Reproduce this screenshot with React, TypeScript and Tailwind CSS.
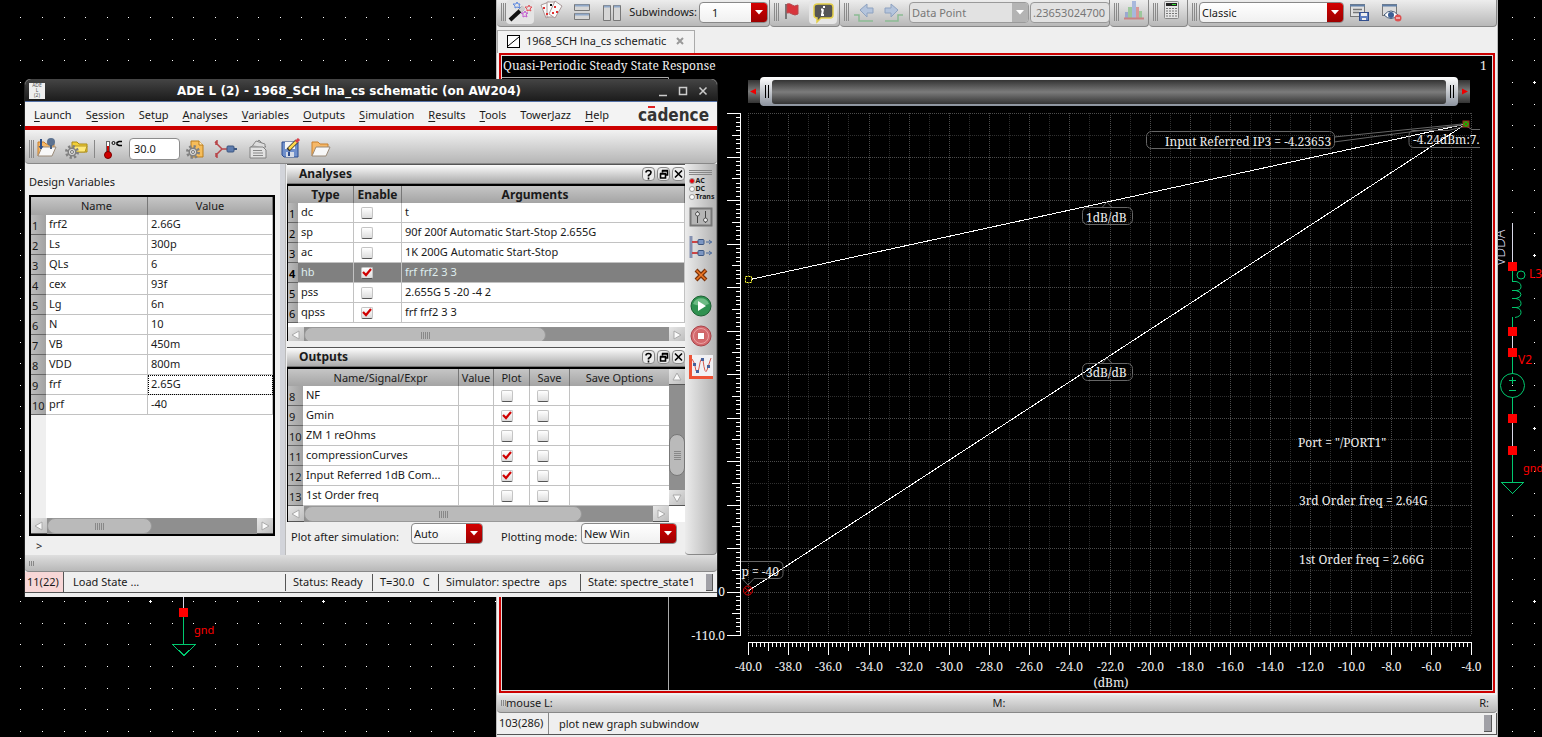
import type { ReactNode } from "react";
import clsx from "clsx";

const designVars = [
  ["frf2", "2.66G"],
  ["Ls", "300p"],
  ["QLs", "6"],
  ["cex", "93f"],
  ["Lg", "6n"],
  ["N", "10"],
  ["VB", "450m"],
  ["VDD", "800m"],
  ["frf", "2.65G"],
  ["prf", "-40"],
];

const analyses = [
  { type: "dc", on: false, args: "t" },
  { type: "sp", on: false, args: "90f 200f Automatic Start-Stop 2.655G" },
  { type: "ac", on: false, args: "1K 200G Automatic Start-Stop" },
  { type: "hb", on: true, args: "frf frf2 3 3" },
  { type: "pss", on: false, args: "2.655G 5 -20 -4 2" },
  { type: "qpss", on: true, args: "frf frf2 3 3" },
];

const outputs = [
  { n: 8, name: "NF", plot: false },
  { n: 9, name: "Gmin", plot: true },
  { n: 10, name: "ZM 1 reOhms", plot: false },
  { n: 11, name: "compressionCurves", plot: true },
  { n: 12, name: "Input Referred 1dB Com...", plot: true },
  { n: 13, name: "1st Order freq", plot: false },
];

const menus = [
  ["", "L", "aunch"],
  ["S", "e", "ssion"],
  ["Set", "u", "p"],
  ["", "A", "nalyses"],
  ["", "V", "ariables"],
  ["", "O", "utputs"],
  ["", "S", "imulation"],
  ["", "R", "esults"],
  ["", "T", "ools"],
  ["TowerJazz", "", ""],
  ["", "H", "elp"],
];

const range = (n: number) => Array.from({ length: n }, (_, i) => i);

/* ---------- schematic canvas ---------- */

const PITCH = 21.625;

function gridPath() {
  let d = "";
  for (let j = -1; j < 34; j++) {
    const y = Math.round(82 + (j - 3) * PITCH);
    for (let i = -7; i < 66; i++) {
      const x = Math.round(150 + i * PITCH);
      d += `M${x} ${y}h1v1h-1z`;
      if (i % 8 === 0 && (j - 3) % 8 === 0) d += `M${x - 1} ${y}h3v1h-3zM${x} ${y - 1}h1v3h-1z`;
    }
  }
  return d;
}

function Schematic() {
  return (
    <svg className="absolute left-0 top-0" width="1542" height="737" fontFamily="'Noto Sans', sans-serif" fontSize="12">
      <path d={gridPath()} fill="#fff" shapeRendering="crispEdges" />
      <g fill="none" stroke="#00c86e" shapeRendering="crispEdges">
        <path d="M183.500 617v27M172.500 644.500h23l-11.500 11z" />
        <path d="M1512.500 271v10M1512.500 317v10M1512.500 357v17M1512.500 397v17M1512.500 455v27M1501.500 482.500h22l-11 11z" />
        <path d="M1509 380.500h7M1512.500 377v7M1509 390.500h7" />
      </g>
      <g fill="none" stroke="#00c86e">
        <circle cx="1521" cy="275" r="4" />
        <circle cx="1512.500" cy="385.500" r="12" />
        <path d="M1512 281.500h4q5 1 5 5t-5 4h-4h4q5 1 5 4t-5 4h-4h4q5 1 5 5t-5 4h-4h4q5 1 5 5t-6 5" />
      </g>
      <path d="M183.500 597v12M1512.500 223v40M1512.500 335v15M1512.500 422v25" stroke="#d8d8e8" />
      <path
        d="M179 608h9v9h-9zM1508 262h9v9h-9zM1508 327h9v9h-9zM1508 348h9v9h-9zM1508 414h9v9h-9zM1508 446h9v9h-9z"
        fill="#f00"
      />
      <g fill="#f00">
        <text x="194" y="634" fontSize="11">gnd</text>
        <text x="1523" y="472" fontSize="11">gnd</text>
        <text x="1529" y="278">L3</text>
        <text x="1518" y="364">V2</text>
      </g>
      <text transform="translate(1505 266) rotate(-90)" fill="#d8d8e8" fontSize="14" fontWeight="300">VDDA</text>
    </svg>
  );
}

/* ---------- graph ---------- */

const X0 = 748;
const X1 = 1471;
const Y0 = 113;
const Y1 = 635;
const px = (v: number) => Math.round(X0 + ((v + 40) / 36) * (X1 - X0)) + 0.5;
const py = (v: number) => Math.round(Y1 - ((v + 110) / 120) * (Y1 - Y0)) + 0.5;

function tickPaths() {
  let d = `M740.500 ${Y0}V${Y1 + 1}M${X0} 642.500H${X1 + 1}`;
  for (const k of range(121)) {
    const len = k % 10 === 0 ? 13 : k % 5 === 0 ? 8 : 4;
    d += `M740 ${py(-110 + k)}h-${len}`;
  }
  for (const k of range(181)) {
    const len = k % 10 === 0 ? 12 : k % 5 === 0 ? 8 : 4;
    d += `M${px(-40 + k / 5)} 643v${len}`;
  }
  return d;
}

function Graph() {
  return (
    <svg
      className="block w-full"
      viewBox="502 56 990 634"
      preserveAspectRatio="xMinYMin meet"
      fontFamily="'Noto Serif', 'Liberation Serif', serif"
      fontSize="12"
    >
      <defs>
        <linearGradient id="thumb" x2="0" y2="1">
          <stop offset="0" stopColor="#333" />
          <stop offset=".5" stopColor="#7c7c7c" />
          <stop offset="1" stopColor="#333" />
        </linearGradient>
        <linearGradient id="frame" x2="0" y2="1">
          <stop offset="0" stopColor="#fff" />
          <stop offset="1" stopColor="#8c939e" />
        </linearGradient>
        <clipPath id="plotClip">
          <rect x="741" y="100" width="739" height="540" />
        </clipPath>
      </defs>

      <text x="503" y="70" fill="#eee">Quasi-Periodic Steady State Response</text>
      <text x="1480" y="70" fill="#eee">1</text>
      <path d="M502 77.500H668.500V690" fill="none" stroke="#aaa" />

      <rect x="748" y="80" width="722" height="23" fill="url(#thumb)" />
      <rect x="760" y="77" width="698" height="29" rx="4" fill="url(#frame)" />
      <rect x="772" y="80" width="674" height="24" rx="3" fill="url(#thumb)" />
      <path d="M765.500 85v13M768.500 85v13M1450.500 85v13M1453.500 85v13" stroke="#000" />
      <path d="M750 91.500l6-3v6zM1468 91.500l-6-3v6z" fill="#e00" />

      <g strokeDasharray="1 1" shapeRendering="crispEdges">
        {range(37).map((i) => (
          <path key={i} d={`M${px(i - 40)} ${Y0}V${Y1}`} stroke={i % 2 ? "#303030" : "#4c4c4c"} />
        ))}
        {range(25).map((i) => (
          <path key={i} d={`M${X0} ${py(i * 5 - 110)}H${X1}`} stroke={i % 2 ? "#303030" : "#4c4c4c"} />
        ))}
      </g>
      <path d={tickPaths()} stroke="#fff" shapeRendering="crispEdges" />

      <path d="M748 280L1466 124M748 591L1466 124" stroke="#fff" strokeWidth="1" shapeRendering="crispEdges" />

      <g fill="none" stroke="#666" clipPath="url(#plotClip)">
        <rect x="1146.500" y="131.500" width="188" height="17" rx="5" />
        <path d="M1334 137L1462 124M1334 142L1462 125" />
        <path d="M1490 147.500H1414q-5 0-5-5v-7q0-5 5-5H1448L1466 126L1472 129.500H1490" />
        <rect x="1082.500" y="207.500" width="50" height="17" rx="5" />
        <path d="M1102 207.500L1107 202L1112 207.500" />
        <rect x="1082.500" y="363.500" width="50" height="17" rx="5" />
        <path d="M1102 363.500L1107 358L1112 363.500" />
        <path d="M700 561.500H778q5 0 5 5v7q0 5-5 5H754L748 585L742 578.500" />
      </g>

      <g fill="#eee" clipPath="url(#plotClip)">
        <text x="1165" y="146">Input Referred IP3 = -4.23653</text>
        <text x="1413" y="144">-4.24dBm:7.7</text>
        <text x="1086" y="222">1dB/dB</text>
        <text x="1086" y="377">3dB/dB</text>
        <text x="779" y="576" textAnchor="end">p = -40</text>
        <text x="1298" y="447">Port = "/PORT1"</text>
        <text x="1299" y="505">3rd Order freq = 2.64G</text>
        <text x="1299" y="564">1st Order freq = 2.66G</text>
      </g>

      <rect x="1463" y="121" width="6" height="6" fill="#0c0" stroke="#a22" />
      <path d="M1463 121l6 6M1469 121l-6 6" stroke="#7a4a10" />
      <rect x="745.500" y="276.500" width="6" height="6" fill="#000" stroke="#ff3" strokeDasharray="2 1" />
      <g fill="none" stroke="#d00">
        <circle cx="748" cy="590.500" r="4.500" />
        <path d="M745 588l6 5M751 588l-6 5" />
      </g>

      <g fill="#eee">
        <text x="725" y="640" textAnchor="end">-110.0</text>
        <text x="725" y="596" textAnchor="end">-100.0</text>
        {range(19).map((i) => (
          <text key={i} x={px(i * 2 - 40)} y="671" textAnchor="middle">
            {(i * 2 - 40).toFixed(1)}
          </text>
        ))}
        <text x="1111" y="687" textAnchor="middle">(dBm)</text>
      </g>
    </svg>
  );
}

/* ---------- small controls ---------- */

function Grip() {
  return (
    <svg width="5" height="18" className="shrink-0">
      <path d="M.5 0v18M2.500 0v18M4.500 0v18" stroke="#8a8a8a" />
    </svg>
  );
}

function Tick({ label, checked }: { label: string; checked: boolean }) {
  return (
    <span className="relative block h-3 w-3">
      <input
        type="checkbox"
        aria-label={label}
        defaultChecked={checked}
        className="peer block h-3 w-3 appearance-none rounded-[2px] border border-[#c4c4c4] border-b-[#555] bg-linear-to-b from-white to-[#dcdcdc]"
      />
      <svg viewBox="0 0 12 12" className="pointer-events-none absolute inset-0 hidden h-3 w-3 peer-checked:block">
        <path d="M2 5l3 3 5-6" fill="none" stroke="#d00000" strokeWidth="2.200" />
      </svg>
    </span>
  );
}

function Drop({ label, value, className, muted }: { label: string; value: string; className: string; muted?: boolean }) {
  return (
    <span
      className={clsx(
        "relative flex h-[21px] shrink-0 overflow-hidden rounded-[4px] border",
        muted ? "border-[#9a9a9a] bg-[#e2e2e2] text-[#777]" : "border-[#888] bg-linear-to-b from-white to-[#f0f0f0]",
        className
      )}
    >
      <select aria-label={label} className="w-full appearance-none bg-transparent px-0.5 leading-none outline-none">
        <option>{value}</option>
      </select>
      <span
        className={clsx(
          "pointer-events-none absolute inset-y-0 right-0 flex w-4 items-center justify-center",
          muted ? "bg-[#b4b4b4]" : "bg-linear-to-b from-[#d40000] to-[#9c0000]"
        )}
      >
        <svg width="8" height="5">
          <path d="M0 0h8L4 4.500z" fill="#fff" />
        </svg>
      </span>
    </span>
  );
}

function ArrowBtn({ dir }: { dir: "left" | "right" | "up" | "down" }) {
  const d = { left: "M9 2v8L2 6z", right: "M3 2v8l7-4z", up: "M2 9h8L6 2z", down: "M2 3h8l-4 7z" }[dir];
  return (
    <button aria-label={dir} className="flex h-4 w-4 shrink-0 items-center justify-center border-b border-[#555] bg-linear-to-br from-[#e6e6e6] to-[#bdbdbd]">
      <svg width="12" height="12">
        <path d={d} fill="#fafafa" stroke="#aaa" />
      </svg>
    </button>
  );
}

function HBar({ thumb }: { thumb: string }) {
  return (
    <div className="flex h-4 shrink-0 bg-[#8f8f8f]">
      <ArrowBtn dir="left" />
      <div className="flex-1">
        <div className={clsx("flex h-full items-center justify-center rounded-full border border-[#999] bg-[#bababa]", thumb)}>
          <svg width="9" height="7">
            <path d="M.5 0v7M2.500 0v7M4.500 0v7M6.500 0v7M8.500 0v7" stroke="#888" />
          </svg>
        </div>
      </div>
      <ArrowBtn dir="right" />
    </div>
  );
}

function PaneTitle({ children }: { children: ReactNode }) {
  return (
    <div className="flex h-5 shrink-0 items-center border-y border-t-[#555] border-b-[#777] bg-linear-to-b from-[#fdfdfd] to-[#ababab] pl-3">
      <h2 className="flex-1 text-[12px] font-bold">{children}</h2>
      {[
        <path key="q" d="M4 5q0-2 2.500-2T9 5q0 1.500-2.500 3v1M6.500 10v2" />,
        <path key="r" d="M5.500 5V3.500h5v4H9M3.500 6.500h5v4h-5zM3 6h6M5 3h6" />,
        <path key="x" d="M3 3l7 7M10 3l-7 7" />,
      ].map((icon, i) => (
        <button key={i} aria-label={["Help", "Float", "Close"][i]} className="ml-0.5 h-[14px] w-[13px] rounded-[4px] border border-[#888] bg-[#ececec]">
          <svg viewBox="1 1 11 11" className="h-full w-full" fill="none" stroke="#000" strokeWidth="1.600">
            {icon}
          </svg>
        </button>
      ))}
    </div>
  );
}

const headCell = "border-r border-[#777] bg-linear-to-b from-[#c6c6c6] to-[#a4a4a4] p-0 align-middle";
const numCell = "h-5 border-b border-[#666] bg-linear-to-r from-[#bcbcbc] to-[#a2a2a2] p-0 pl-px pt-[3px] text-left align-top font-normal leading-4";
const cell = "h-5 overflow-hidden border-b border-r border-[#c2c2c2] p-0 pl-[3px] align-top leading-[18px] whitespace-nowrap";

/* ---------- icons ---------- */

function Gear({ x, y }: { x: number; y: number }) {
  return (
    <g transform={`translate(${x} ${y})`}>
      <circle r="5.500" fill="none" stroke="#808080" strokeWidth="3" strokeDasharray="2.200 2.100" />
      <circle r="3.800" fill="#d8d8d8" stroke="#808080" strokeWidth="1.500" />
      <circle r="1.500" fill="#eee" stroke="#777" />
    </g>
  );
}

const Folder = () => (
  <g strokeLinejoin="round">
    <path d="M2 18V4h6l2 2h8v4" fill="#f6b868" stroke="#c9802c" />
    <path d="M2 18L6 9h14l-4 9z" fill="#f8f8f8" stroke="#9a8a78" />
  </g>
);

function ToolIcon({ name, children, w = 22 }: { name: string; children: ReactNode; w?: number }) {
  return (
    <button aria-label={name} className="shrink-0">
      <svg width={w} height="22" viewBox={`0 0 ${w} 22`} fill="none">
        {children}
      </svg>
    </button>
  );
}

function AdeToolbar() {
  return (
    <div className="flex h-[34px] shrink-0 items-center rounded-b border-b border-[#888] bg-linear-to-b from-[#f2f2f2] to-[#b6b6b6] pl-1 pt-1">
      <Grip />
      <div className="ml-0.5 flex flex-1 items-center gap-1.5">
        <ToolIcon name="Load state">
          <Folder />
          <path d="M5 1v10" stroke="#2f4f86" strokeWidth="2" />
          <path d="M3 8l2 3 2-3" stroke="#2f4f86" />
          <circle cx="15" cy="4" r="4" fill="#5c7290" />
          <path d="M15 7v4" stroke="#4b607e" strokeWidth="2" />
        </ToolIcon>
        <ToolIcon name="Setup directory" w={24}>
          <path d="M8 4h5l2 2h8v8H8z" fill="#f2cf38" stroke="#a98a14" />
          <path d="M9 8h14l-2 6H8z" fill="#ffe97a" stroke="#b59622" />
          <Gear x={8} y={14} />
        </ToolIcon>
        <span className="h-[18px] w-px bg-[#888]" />
        <ToolIcon name="Temperature">
          <path d="M7 3v11" stroke="#666" strokeWidth="4" />
          <path d="M7 4v6" stroke="#fff" strokeWidth="2" />
          <path d="M7 8v8" stroke="#c00" strokeWidth="2" />
          <circle cx="7" cy="17" r="3.500" fill="#d00000" stroke="#700" />
          <circle cx="12.500" cy="5" r="1.500" stroke="#000" />
          <path d="M21 3.500h-3l-2 1v2l2 1h3" stroke="#000" strokeWidth="1.400" />
        </ToolIcon>
        <input aria-label="Temperature value" defaultValue="30.0" className="h-[22px] w-[51px] rounded-[4px] border border-[#8c8c8c] bg-white px-1 outline-none" />
        <ToolIcon name="Edit options">
          <path d="M5 3h8l4 4v12H5z" fill="#f6bd5a" stroke="#b97c1c" />
          <path d="M13 3v4h4" fill="#fff0cc" stroke="#b97c1c" />
          <Gear x={7} y={14} />
        </ToolIcon>
        <ToolIcon name="Edit analyses" w={24}>
          <path d="M3 2v4l5 5-5 5v4M1 4l2 2M8 11h7M2 7v-4M2 15v4" stroke="#b8464a" strokeWidth="1.500" />
          <rect x="13" y="8" width="7" height="6" rx="1" fill="#5e7cae" stroke="#3c5680" />
          <path d="M20 11h3" stroke="#3c5680" strokeWidth="2" />
        </ToolIcon>
        <span className="ml-1 flex">
          <ToolIcon name="Netlist">
            <path d="M3 9l8-7 7 7" fill="#bbb" stroke="#888" />
            <path d="M5 7l3-4 9 3v4" fill="#ddd" stroke="#888" />
            <path d="M2 9h13l3 3v8H2z" fill="#e2e2e2" stroke="#808080" />
            <path d="M5 12.500h9M5 15h10M5 17.500h10" stroke="#888" />
          </ToolIcon>
        </span>
        <span className="ml-1 flex gap-2">
          <ToolIcon name="Save state">
            <path d="M2 4h16v15H4l-2-2z" fill="#6f8fcb" stroke="#2d4c8e" />
            <path d="M5 4h10v7H5z" fill="#f6f6f6" />
            <path d="M6 14h8v5H6z" fill="#d5dbe6" />
            <path d="M8 14h2v4H8z" fill="#2d4c8e" />
            <path d="M8 12l9-9" stroke="#333" strokeWidth="4" />
            <path d="M9 11l8-8" stroke="#ffd84a" strokeWidth="2.500" />
            <path d="M16 4l3-3" stroke="#d8404a" strokeWidth="3" />
          </ToolIcon>
          <ToolIcon name="Open">
            <Folder />
          </ToolIcon>
        </span>
      </div>
    </div>
  );
}

function SideTools() {
  return (
    <div className="flex w-8 shrink-0 flex-col items-center rounded-b border-b border-r border-[#888] bg-linear-to-r from-[#ececec] to-[#b2b2b2] pt-1.5">
      <svg width="23" height="6">
        <path d="M0 .5h23M0 2.500h23M0 4.500h23" stroke="#888" />
      </svg>
      <button className="mt-px w-6 text-left text-[7px] font-bold leading-2">
        {["AC", "DC", "Trans"].map((t, i) => (
          <span key={t} className="flex items-center">
            <span className={clsx("mr-px h-1.5 w-1.5 shrink-0 rounded-full border border-[#999]", i === 0 ? "bg-red-600" : "bg-white")} />
            {t}
          </span>
        ))}
      </button>
      <button aria-label="Variables" className="mt-1.5">
        <svg width="24" height="20" fill="none">
          <rect x="1.500" y="1.500" width="21" height="17" fill="#b5b5b5" stroke="#777" strokeWidth="2" />
          <path d="M8.500 4v12M16.500 4v12" stroke="#444" />
          <circle cx="8.500" cy="7" r="2" fill="#eee" stroke="#555" />
          <circle cx="16.500" cy="13" r="2" fill="#eee" stroke="#555" />
        </svg>
      </button>
      <button aria-label="Outputs setup" className="mt-2">
        <svg width="24" height="24" fill="none">
          <path d="M2 1v22" stroke="#8490b0" strokeWidth="3" />
          <path d="M3 7h6M3 18h6" stroke="#c44" strokeWidth="2" />
          <rect x="9" y="4.500" width="6" height="5" rx="1" fill="#7c96c2" stroke="#3c5680" />
          <rect x="9" y="15.500" width="6" height="5" rx="1" fill="#7c96c2" stroke="#3c5680" />
          <path d="M17 7h6M20 5l2.500 2-2.500 2M17 18h6M20 16l2.500 2-2.500 2" stroke="#4b6a9c" />
        </svg>
      </button>
      <button aria-label="Delete" className="mt-2">
        <svg width="16" height="16">
          <path d="M3 3l10 10M13 3L3 13" stroke="#7c3208" strokeWidth="4" />
          <path d="M3.500 3.500l9 9M12.500 3.500l-9 9" stroke="#f07a28" strokeWidth="1.500" />
        </svg>
      </button>
      <button aria-label="Run" className="mt-3">
        <svg width="22" height="22">
          <circle cx="11" cy="11" r="10" fill="#2f9150" stroke="#1a6032" />
          <path d="M3 9a8.500 8.500 0 0116 0q-8 3-16 0z" fill="#6dbb84" />
          <path d="M8 6l8 5-8 5z" fill="#fff" />
        </svg>
      </button>
      <button aria-label="Stop" className="mt-2">
        <svg width="22" height="22">
          <circle cx="11" cy="11" r="10" fill="#d4696d" stroke="#a84248" />
          <circle cx="11" cy="11" r="7.500" fill="none" stroke="#e9a2a4" />
          <rect x="7.500" y="7.500" width="7" height="7" fill="#fff" stroke="#c66" />
        </svg>
      </button>
      <button aria-label="Plot" className="mt-2">
        <svg width="24" height="24" fill="none">
          <rect x="2" width="22" height="21" fill="#f1f1f4" />
          <path d="M1.500 0v22.500H24" stroke="#ee5336" strokeWidth="3" />
          <path d="M3 4q3 3 4 12 2 2 3-3 2-13 4-8 2 16 4 10l4-12" stroke="#d65a50" />
          <path d="M4 8h3v3H4zM7 15h3v3H7zM12 3h3v3h-3zM18 10h3v3h-3z" fill="#46609a" />
        </svg>
      </button>
    </div>
  );
}

/* ---------- ADE window ---------- */

function DesignVariables() {
  return (
    <section className="flex w-[255px] shrink-0 flex-col px-1 pt-[9px]">
      <h2 className="mb-1 h-[18px] leading-[18px]">Design Variables</h2>
      <div className="mr-px flex flex-1 flex-col border-2 border-black bg-[linear-gradient(90deg,#efefef_15px,#fff_15px)]">
        <table className="w-full table-fixed border-separate border-spacing-0">
          <colgroup>
            <col className="w-[15px]" />
            <col className="w-[102px]" />
            <col />
          </colgroup>
          <thead>
            <tr className="h-[18px] leading-4">
              <th className={clsx(headCell, "border-r-0")} />
              <th className={clsx(headCell, "font-normal")}>Name</th>
              <th className={clsx(headCell, "font-normal")}>Value</th>
            </tr>
          </thead>
          <tbody>
            {designVars.map(([name, value], i) => (
              <tr key={name}>
                <th className={numCell}>{i + 1}</th>
                <td className={cell}>{name}</td>
                <td className={clsx(cell, i === 8 && "outline-1 -outline-offset-1 outline-dotted outline-black")}>{value}</td>
              </tr>
            ))}
          </tbody>
        </table>
        <div className="flex-1" />
        <HBar thumb="w-[105px]" />
      </div>
      <p className="h-[19px] pl-[7px] leading-[19px]">&gt;</p>
    </section>
  );
}

function AnalysesPane() {
  return (
    <section className="flex flex-col">
      <PaneTitle>Analyses</PaneTitle>
      <div className="flex h-[157px] flex-col overflow-hidden border-l border-t-2 border-black bg-white">
        <table className="w-full table-fixed border-separate border-spacing-0">
          <colgroup>
            <col className="w-[10px]" />
            <col className="w-[56px]" />
            <col className="w-[48px]" />
            <col />
          </colgroup>
          <thead>
            <tr className="h-[17px] text-[12px] leading-4">
              <th className={clsx(headCell, "border-r-0")} />
              <th className={headCell}>Type</th>
              <th className={headCell}>Enable</th>
              <th className={clsx(headCell, "pr-4")}>Arguments</th>
            </tr>
          </thead>
          <tbody>
            {analyses.map((a, i) => (
              <tr key={a.type} className={clsx(i === 3 && "bg-[#808080] text-[#dfeeee]")}>
                <th className={clsx(numCell, "text-black", i === 3 && "font-bold!")}>{i + 1}</th>
                <td className={cell}>{a.type}</td>
                <td className={clsx(cell, "pt-1 pl-[7px]")}>
                  <Tick label={`Enable ${a.type}`} checked={a.on} />
                </td>
                <td className={cell}>{a.args}</td>
              </tr>
            ))}
          </tbody>
        </table>
        <div className="h-1 shrink-0" />
        <HBar thumb="w-[242px]" />
      </div>
    </section>
  );
}

function OutputsPane() {
  return (
    <section className="mt-1.5 flex flex-col">
      <PaneTitle>Outputs</PaneTitle>
      <div className="flex border-l border-t-2 border-black bg-white">
        <div className="min-w-0 flex-1">
          <table className="w-full table-fixed border-separate border-spacing-0">
            <colgroup>
              <col className="w-[15px]" />
              <col className="w-[156px]" />
              <col className="w-[35px]" />
              <col className="w-[36px]" />
              <col className="w-[40px]" />
              <col />
            </colgroup>
            <thead>
              <tr className="h-[17px] leading-4 whitespace-nowrap">
                {["", "Name/Signal/Expr", "Value", "Plot", "Save", "Save Options"].map((h, i) => (
                  <th key={i} className={clsx(headCell, "font-normal", (i === 0 || i === 5) && "border-r-0")}>
                    {h}
                  </th>
                ))}
              </tr>
            </thead>
            <tbody>
              {outputs.map((o) => (
                <tr key={o.n}>
                  <th className={numCell}>{o.n}</th>
                  <td className={cell}>{o.name}</td>
                  <td className={cell} />
                  <td className={clsx(cell, "pt-1 pl-[7px]")}>
                    <Tick label={`Plot ${o.name}`} checked={o.plot} />
                  </td>
                  <td className={clsx(cell, "pt-1 pl-[7px]")}>
                    <Tick label={`Save ${o.name}`} checked={false} />
                  </td>
                  <td className={clsx(cell, "border-r-0")} />
                </tr>
              ))}
            </tbody>
          </table>
          <HBar thumb="w-[278px]" />
        </div>
        <div className="mb-4 flex w-4 shrink-0 flex-col bg-[#8f8f8f]">
          <ArrowBtn dir="up" />
          <div className="flex flex-1 flex-col justify-end pb-3.5">
            <div className="flex h-[42px] items-center justify-center rounded-full border border-[#777] bg-[#bababa]">
              <svg width="7" height="9">
                <path d="M0 .5h7M0 2.500h7M0 4.500h7M0 6.500h7M0 8.500h7" stroke="#888" />
              </svg>
            </div>
          </div>
          <ArrowBtn dir="down" />
        </div>
      </div>
      <div className="flex items-start pt-px pl-1">
        <span className="w-[120px] pt-1.5">Plot after simulation:</span>
        <Drop label="Plot after simulation" value="Auto" className="w-[72px]" />
        <span className="ml-[18px] w-20 pt-1.5 whitespace-nowrap">Plotting mode:</span>
        <Drop label="Plotting mode" value="New Win" className="w-24" />
      </div>
    </section>
  );
}

function AdeWindow() {
  return (
    <div className="absolute left-6 top-[79px] flex h-[518px] w-[694px] flex-col rounded-t-md border-x border-[#222] bg-[#efefef]">
      <div className="flex h-[23px] shrink-0 items-center rounded-t-md border-b border-[#5572a8] bg-linear-to-b from-[#454545] to-[#1c1c1c] px-1 pt-0.5 text-white">
        <span className="h-4 w-4 bg-[#eee] text-center text-[5px] leading-[5px] text-[#555]">
          ADE
          <br />L<br />
          (2)
        </span>
        <h1 className="flex-1 text-center font-['DejaVu_Sans'] text-[12px] font-bold">
          ADE L (2) - 1968_SCH lna_cs schematic (on AW204)
        </h1>
        {["M1 9.500h8", "M1.500 1.500h7v7h-7z", "M1.500 1.500l7 7M8.500 1.500l-7 7"].map((d, i) => (
          <button key={d} aria-label={["Minimize", "Maximize", "Close"][i]} className="w-5">
            <svg width="10" height="11" className="mx-auto" fill="none" stroke="#ccc" strokeWidth="1.500">
              <path d={d} />
            </svg>
          </button>
        ))}
      </div>

      <nav className="flex h-7 shrink-0 items-center justify-between border-b-4 border-[#cc0000] bg-[#f3f3f3] pl-[9px] pr-1.5 pt-0.5">
        <div className="flex gap-[14px]">
          {menus.map(([a, key, b]) => (
            <button key={a + key + b}>
              {a}
              <span className="underline underline-offset-2">{key}</span>
              {b}
            </button>
          ))}
        </div>
        <svg width="74" height="20">
          <text x="1" y="16" fontSize="17" fontFamily="'DejaVu Sans Condensed', 'DejaVu Sans'" fontWeight="bold" fill="#333">
            cadence
          </text>
          <path d="M11 2h7" stroke="#e02020" strokeWidth="2" />
        </svg>
      </nav>

      <AdeToolbar />

      <div className="flex min-h-0 flex-1">
        <DesignVariables />
        <div className="w-[5px] shrink-0 bg-[#d2d4da]" />
        <div className="flex min-w-0 flex-1 flex-col border-l border-[#bbb] pl-px">
          <AnalysesPane />
          <OutputsPane />
        </div>
        <SideTools />
      </div>

      <div className="flex h-[17px] shrink-0 items-center rounded-b border-b border-[#888] bg-linear-to-b from-[#dedede] to-[#b8b8b8] pl-1">
        <svg width="5" height="5">
          <path d="M.5 0v5M2.500 0v5M4.500 0v5" stroke="#888" />
        </svg>
      </div>
      <div className="mb-1 flex h-[21px] shrink-0 items-center border-b border-[#555] whitespace-pre [&>span]:h-[17px] [&>span]:border-l [&>span]:border-[#555] [&>span]:pl-[7px] [&>span]:leading-4">
        <b className="h-full w-[39px] border-r border-[#555] bg-[#f8d7d7] pl-0.5 font-normal leading-5">11(22)</b>
        <p className="flex-1 pl-[9px]">Load State ...</p>
        <span className="w-[87px]">Status: Ready</span>
        <span className="w-[66px]">T=30.0   C</span>
        <span className="w-[142px]">Simulator: spectre   aps</span>
        <span className="w-[126px]">State: spectre_state1</span>
        <i className="mr-1 h-[17px] w-[7px] border-b border-r border-[#555] bg-[#a0a0a6]" />
      </div>
    </div>
  );
}

/* ---------- waveform window ---------- */

const bar = "flex h-full items-center rounded-b border-b border-r border-[#888] bg-linear-to-b from-[#ededed] to-[#b8b8b8] pb-0.5";

function WaveToolbar() {
  return (
    <div className="flex h-[27px] shrink-0">
      <div className={clsx(bar, "w-[273px] pl-1")}>
        <Grip />
        <button aria-label="Wand" className="h-full w-7 shrink-0 rounded bg-[#e4e4e4]">
          <svg width="28" height="24" fill="none">
            <path d="M4 20L17 8" stroke="#111" strokeWidth="4" />
            <path d="M14 11l4-4" stroke="#ccc" strokeWidth="4" />
            <path d="M11 2l1 2 2 0-1 2 1 2-3-1-2 1 0-2-2-2 3 0z" stroke="#5a86e0" />
            <path d="M23 5l1 2 2 0-2 2 1 2-2-1-2 1 0-2-2-2 3 0z" stroke="#e0525a" />
            <path d="M19 11l1 2 2 0-2 1 1 3-2-1-2 1 0-3-2-1 3 0z" stroke="#c45ad0" />
          </svg>
        </button>
        <span className="ml-1.5">
          <ToolIcon name="Cards" w={24}>
            <path d="M1 6l8-3 4 13-7 3z" fill="#fafafa" stroke="#a99" />
            <path d="M7 3h8v15H7z" fill="#fafafa" stroke="#a99" />
            <path d="M15 2l7 5-7 12-6-4z" fill="#fafafa" stroke="#a99" />
            <path d="M3 8h2v2H3zM14 7h2v2h-2zM16 12h2v2h-2zM12 13h2v2h-2zM6 14h2v2H6z" fill="#e03030" />
            <path d="M10 5h2v2h-2z" fill="#111" />
          </ToolIcon>
        </span>
        <span className="ml-2 flex gap-2">
          <ToolIcon name="Split rows" w={20}>
            <path d="M2.500 3.500h15v6h-15zM2.500 12.500h15v6h-15z" fill="#d6d6d6" stroke="#777" />
            <path d="M3 4.500h14M3 13.500h14" stroke="#90a8c8" strokeWidth="2" />
          </ToolIcon>
          <ToolIcon name="Split columns" w={22}>
            <path d="M3.500 4.500h7v15h-7zM13.500 4.500h7v15h-7z" fill="#d6d6d6" stroke="#777" />
            <path d="M4 5.500h6M14 5.500h6" stroke="#90a8c8" strokeWidth="2" />
          </ToolIcon>
        </span>
        <span className="ml-1 w-[71px] shrink-0 text-right">Subwindows:</span>
        <Drop label="Subwindows" value="   1" className="ml-0.5 w-[69px] bg-white [&>select]:pl-3" />
      </div>
      <div className={clsx(bar, "w-[70px] pl-1")}>
        <Grip />
        <span className="ml-1">
          <ToolIcon name="Flag" w={18}>
            <path d="M3 5v15" stroke="#777" strokeWidth="2" />
            <path d="M4 5q3-1 5 1t6 0v9q-3 2-6 0t-5-1z" fill="#d8353c" stroke="#b7484d" />
          </ToolIcon>
        </span>
        <button aria-label="Info" className="ml-2 h-full w-7 rounded bg-[#e6e6e6]">
          <svg width="28" height="24">
            <path d="M9 4h12q3 0 3 3v8q0 3-3 3h-9l-4 4v-4q-3 0-3-3V7q0-3 4-3z" fill="#555" stroke="#e4cf48" strokeWidth="1.500" />
            <path d="M15 6v2M14 9l-1 6M12 15h3M12 9.500h2" stroke="#fff" strokeWidth="2" />
          </svg>
        </button>
      </div>
      <div className={clsx(bar, "w-[270px] pl-1")}>
        <Grip />
        <span className="ml-1 flex gap-2">
          <ToolIcon name="Previous" w={22}>
            <path d="M7 9l7-6v4h6v5h-6v4z" fill="#b4c4dc" stroke="#8ea2c0" />
            <path d="M1 14h5v6h14" stroke="#8cbc94" strokeWidth="1.500" />
          </ToolIcon>
          <ToolIcon name="Next" w={22}>
            <path d="M15 9L8 3v4H2v5h6v4z" fill="#b4c4dc" stroke="#8ea2c0" />
            <path d="M2 20h13v-6h5" stroke="#8cbc94" strokeWidth="1.500" />
          </ToolIcon>
        </span>
        <Drop label="Navigate by" value="Data Point" muted className="ml-1 w-[120px]" />
        <input
          aria-label="Value"
          disabled
          defaultValue=".23653024700"
          className="ml-px h-[21px] w-20 shrink-0 rounded-[4px] border border-[#999] bg-[#e2e2e2] px-0.5 text-[#777]"
        />
      </div>
      <div className={clsx(bar, "w-[39px] pl-1")}>
        <Grip />
        <span className="ml-1">
          <ToolIcon name="Histogram">
            <path d="M2 19v-6h3v6z" fill="#9aa8d0" />
            <path d="M5 19V8h4v11z" fill="#9cc89c" />
            <path d="M9 19V2h4v17z" fill="#a8b8dc" />
            <path d="M13 19V8h3v11z" fill="#d89898" />
            <path d="M16 19v-7h3v7z" fill="#9cc89c" />
            <path d="M1 19.500h20" stroke="#c88484" strokeWidth="2" />
          </ToolIcon>
        </span>
      </div>
      <div className={clsx(bar, "w-[39px] pl-1")}>
        <Grip />
        <span className="ml-1.5">
          <ToolIcon name="Calculator" w={16}>
            <rect x=".5" y="2.500" width="14" height="17" rx="1" fill="#e6e6e6" stroke="#888" />
            <path d="M2 5.500h11" stroke="#222" strokeWidth="3" />
            <path d="M8 5.500h4" stroke="#3d3" />
            <path d="M2 9.500h11M2 12h11M2 14.500h11M2 17h11" stroke="#777" strokeDasharray="2 1" />
          </ToolIcon>
        </span>
      </div>
      <div className={clsx(bar, "flex-1 pl-1")}>
        <Grip />
        <Drop label="Workspace" value="Classic" className="ml-0.5 w-[145px]" />
        <span className="ml-1 flex gap-2.5">
          <ToolIcon name="Save workspace">
            <rect x="2.500" y="3.500" width="14" height="12" fill="#e0e0e0" stroke="#777" />
            <path d="M2 4.500h15" stroke="#5f7fa8" strokeWidth="2" />
            <path d="M5 8.500h9M5 11.500h6" stroke="#777" strokeWidth="1.500" />
            <rect x="11.500" y="11.500" width="9" height="8" fill="#5f7fc0" stroke="#334f8c" />
            <path d="M13 12h6v3h-6zM14 17h4v2h-4z" fill="#eee" />
          </ToolIcon>
          <ToolIcon name="Hide workspace" w={24}>
            <rect x="2.500" y="3.500" width="14" height="11" fill="#dcdcdc" stroke="#777" />
            <path d="M2 4.500h15" stroke="#5f7fa8" strokeWidth="2" />
            <path d="M4 14q7-8 14 0-7 7-14 0z" fill="#fff" stroke="#445a78" />
            <circle cx="11" cy="14" r="3" fill="#3d5f94" />
            <circle cx="18" cy="17" r="3.500" fill="#dd5050" />
            <path d="M16 17h4" stroke="#fff" />
          </ToolIcon>
        </span>
      </div>
    </div>
  );
}

function WaveWindow() {
  return (
    <div className="absolute inset-y-0 left-[496px] right-11 flex flex-col border-x border-[#bbb] bg-[#efefef]">
      <WaveToolbar />
      <div className="flex h-[26px] shrink-0 items-end">
        <div className="flex h-[23px] items-center border border-b-0 border-[#aaa] bg-[#f2f2f2] pl-2">
          <svg width="16" height="14" className="mr-1">
            <rect x="1.500" y=".5" width="12" height="12" fill="#fff" stroke="#000" />
            <path d="M2 11l11-9" stroke="#000" />
          </svg>
          <span className="w-[148px] pb-0.5 whitespace-nowrap">1968_SCH lna_cs schematic</span>
          <button aria-label="Close tab" className="w-5 pb-0.5">
            <svg width="8" height="8" className="ml-0.5">
              <path d="M1 1l6 6M7 1L1 7" stroke="#999" strokeWidth="2" />
            </svg>
          </button>
        </div>
      </div>
      <main className="mx-0.5 flex-1 overflow-hidden border-2 border-[#cc0000] bg-black">
        <div className="h-full border border-[#ddd]">
          <Graph />
        </div>
      </main>
      <div className="mt-0.5 flex h-[18px] shrink-0 items-center rounded-b border-b border-[#888] bg-linear-to-b from-[#e6e6e6] to-[#b8b8b8] pb-0.5 pl-1 pr-2">
        <svg width="5" height="6">
          <path d="M.5 0v6M2.500 0v6M4.500 0v6" stroke="#888" />
        </svg>
        <span className="flex-1">mouse L:</span>
        <span className="flex-1">M:</span>
        <span>R:</span>
      </div>
      <div className="mb-0.5 flex h-[22px] shrink-0 items-center border-b border-r border-[#555] pl-0.5 pr-1">
        <span className="h-full w-[50px] border-r border-[#888] leading-5">103(286)</span>
        <span className="flex-1 pl-2.5">plot new graph subwindow</span>
        <i className="h-[17px] w-2 border-b border-r border-[#555] bg-[#a0a0a6]" />
      </div>
    </div>
  );
}

export default function App() {
  return (
    <div className="relative h-screen w-full overflow-hidden bg-black font-['Noto_Sans',sans-serif] text-[11px] leading-4 text-[#1a1a1a]">
      <Schematic />
      <WaveWindow />
      <AdeWindow />
    </div>
  );
}
